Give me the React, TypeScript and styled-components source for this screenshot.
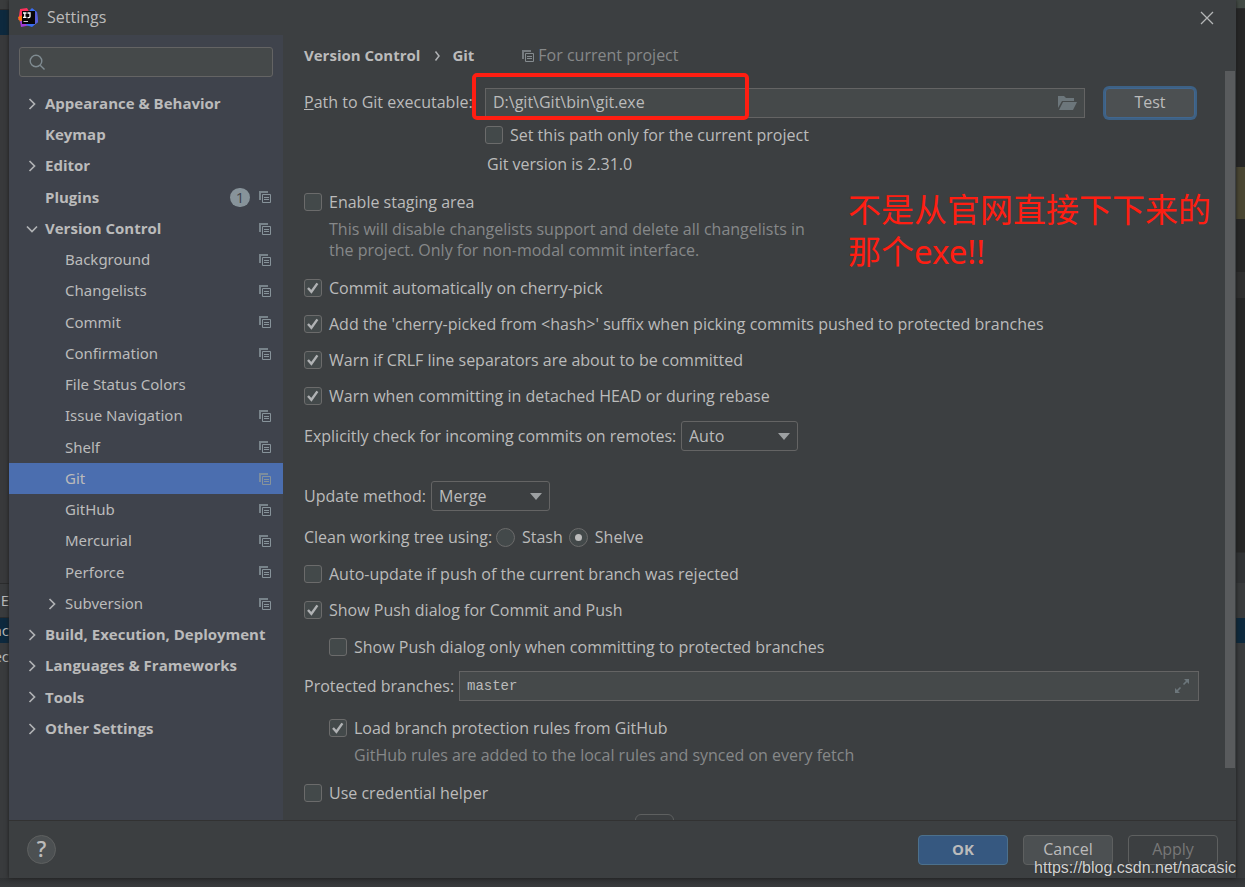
import React, { useState } from "react";
import styled, { createGlobalStyle } from "styled-components";

const color = {
  panel: "#3c3f41",
  side: "#3f434c",
  text: "#bbbbbb",
  muted: "#868889",
  line: "#323232",
  field: "#45494a",
  border: "#646464",
  icon: "#87939a",
  select: "#4b6eaf",
  red: "#ff1e12",
};

const Global = createGlobalStyle`
  *, *::before, *::after { box-sizing: border-box; }
  body {
    margin: 0;
    background: #3a3c3d;
    color: ${color.text};
    font: 16px/21px "Open Sans", "Noto Sans", sans-serif;
  }
  button, input, select { font: inherit; color: inherit; margin: 0; }
`;

const Desktop = styled.div`
  display: flex;
  flex-direction: column;
  height: 100vh;
  overflow: hidden;
`;
const Middle = styled.div`
  flex: 1;
  min-height: 0;
  display: flex;
`;
const Backdrop = styled.div`
  flex: none;
  width: 9px;
  display: flex;
  flex-direction: column;
  overflow: hidden;
  font-size: 15px;
`;
const Band = styled.div<{ $h?: number; $bg: string; $line?: boolean }>`
  flex: ${(p) => (p.$h ? "none" : "1")};
  height: ${(p) => (p.$h ? p.$h + "px" : "auto")};
  display: flex;
  align-items: center;
  justify-content: flex-end;
  background: ${(p) => p.$bg};
  border-top: ${(p) => (p.$line ? "1px solid #2b2c2d" : "none")};
`;
const BottomStrip = styled.div`
  flex: none;
  height: 9px;
  background: linear-gradient(#303234, #393b3d);
`;

const Dialog = styled.main`
  flex: 1;
  min-width: 0;
  position: relative;
  display: flex;
  flex-direction: column;
  background: ${color.panel};
  box-shadow: 0 0 4px #1c1c1c;
`;
const TitleBar = styled.header`
  flex: none;
  height: 35px;
  display: flex;
  align-items: center;
  gap: 9px;
  padding: 0 20px 0 9px;
`;
const Title = styled.h1`
  flex: 1;
  margin: 0;
  font-size: 16px;
  font-weight: 400;
`;
const PlainButton = styled.button`
  display: flex;
  padding: 0;
  border: 0;
  background: none;
`;
const Body = styled.div`
  flex: 1;
  min-height: 0;
  display: flex;
`;

const Sidebar = styled.nav`
  flex: none;
  width: 274px;
  background: ${color.side};
  font-size: 15px;
  overflow: hidden;
`;
const Search = styled.label`
  display: flex;
  align-items: center;
  height: 30px;
  margin: 12px 10px 11px;
  padding: 0 9px;
  border: 1px solid ${color.border};
  border-radius: 3px;
  background: ${color.field};
`;
const BareInput = styled.input<{ $mono?: boolean }>`
  flex: 1;
  min-width: 0;
  padding: 0;
  border: 0;
  outline: 0;
  background: none;
  font-family: ${(p) => (p.$mono ? '"Liberation Mono", monospace' : "inherit")};
  font-size: ${(p) => (p.$mono ? "14px" : "16px")};
`;
const TreeRow = styled.button<{ $level: number; $active?: boolean }>`
  display: flex;
  align-items: center;
  width: 100%;
  height: 31px;
  padding: 0 12px 0 ${(p) => (p.$level ? 36 : 16)}px;
  border: 0;
  background: ${(p) => (p.$active ? color.select : "none")};
  font-family: ${(p) => (p.$level ? '"Noto Sans", sans-serif' : "inherit")};
  font-weight: ${(p) => (p.$level ? 400 : 700)};
  text-align: left;
  white-space: nowrap;
  &:nth-child(4n) { height: 32px; }
`;
const Toggle = styled.span`
  flex: none;
  display: flex;
  width: 20px;
`;
const RowText = styled.span`
  flex: 1;
`;
const Badge = styled.span`
  width: 20px;
  height: 19px;
  margin-right: 9px;
  border-radius: 10px;
  background: ${color.icon};
  color: ${color.side};
  font-weight: 400;
  line-height: 19px;
  text-align: center;
`;

const Content = styled.section`
  flex: 1;
  min-width: 0;
  display: flex;
  flex-direction: column;
`;
const Crumbs = styled.div`
  flex: none;
  display: flex;
  align-items: center;
  height: 36px;
  padding: 5px 0 0 21px;
  font-size: 15px;
  font-weight: 700;
`;
const CrumbArrow = styled.span`
  display: flex;
  margin: 0 11px 0 14px;
`;
const Scope = styled.span`
  display: flex;
  align-items: center;
  gap: 4px;
  margin-left: 48px;
  color: ${color.muted};
  font-size: 16px;
  font-weight: 400;
`;
const ScrollArea = styled.div`
  flex: 1;
  min-height: 0;
  display: flex;
  overflow: hidden;
`;
const Form = styled.form`
  flex: 1;
  min-width: 0;
  padding: 14px 26px 0 21px;
`;
const ScrollThumb = styled.div`
  flex: none;
  width: 10px;
  height: 93%;
  margin-right: 1px;
  background: #595b5d;
`;
const Row = styled.div<{ $top: number; $indent?: number; $h?: number }>`
  display: flex;
  align-items: center;
  height: ${(p) => p.$h || 24}px;
  margin-top: ${(p) => p.$top}px;
  padding-left: ${(p) => p.$indent || 0}px;
  white-space: nowrap;
`;
const Hint = styled.p<{ $indent: number }>`
  margin: 5px 0 0 ${(p) => p.$indent}px;
  color: ${color.muted};
`;
const FieldLabel = styled.label<{ $w: number }>`
  flex: none;
  width: ${(p) => p.$w}px;
`;
const Field = styled.div`
  position: relative;
  flex: 1;
  display: flex;
  align-items: center;
  height: 30px;
  padding: 0 7px;
  border: 1px solid ${color.border};
  background: ${color.field};
`;
const RedFrame = styled.div`
  position: absolute;
  left: -14px;
  top: -16px;
  width: 277px;
  height: 47px;
  border: 4px solid ${color.red};
  border-radius: 5px;
  pointer-events: none;
`;
const Button = styled.button<{ $kind?: "primary" | "focus" }>`
  flex: none;
  width: 90px;
  height: 30px;
  padding: 0;
  border: 1px solid ${(p) => (p.$kind === "primary" ? "#4c708c" : p.$kind === "focus" ? "#41678f" : "#5e6060")};
  border-radius: 4px;
  background: ${(p) => (p.$kind === "primary" ? "#365880" : "#4c5052")};
  font-size: ${(p) => (p.$kind === "primary" ? 15 : 16)}px;
  font-weight: ${(p) => (p.$kind === "primary" ? 700 : 400)};
  box-shadow: ${(p) => (p.$kind === "focus" ? "0 0 0 2px #3d6185" : "none")};
  &:disabled { background: none; color: #777777; }
`;
const HelperButton = styled(Button)`
  width: 39px;
  background: none;
  border-radius: 6px;
`;
const TestSlot = styled.div`
  display: flex;
  margin: 0 4px 0 20px;
`;

const CheckLabel = styled.label`
  display: flex;
  align-items: center;
  gap: 7px;
`;
const CheckBox = styled.span`
  display: grid;
  place-items: center;
  & > * { grid-area: 1 / 1; }
  svg { pointer-events: none; }
`;
const Tick = styled.input`
  appearance: none;
  width: 18px;
  height: 18px;
  border: 1px solid #6b6b6b;
  border-radius: 3px;
  background: #43494a;
`;
const Radio = styled(Tick)`
  width: 19px;
  height: 19px;
  border-radius: 10px;
  display: grid;
  place-items: center;
  &:checked::before {
    content: "";
    width: 7px;
    height: 7px;
    border-radius: 4px;
    background: ${color.text};
  }
`;
const RadioLabel = styled(CheckLabel)`
  margin-right: 6px;
`;
const SelectWrap = styled.span<{ $w: number }>`
  display: grid;
  align-items: center;
  width: ${(p) => p.$w}px;
  & > * { grid-area: 1 / 1; }
  svg { justify-self: end; margin-right: 8px; pointer-events: none; }
`;
const SelectBox = styled.select`
  appearance: none;
  height: 30px;
  padding: 0 7px;
  border: 1px solid ${color.border};
  border-radius: 3px;
  background: ${color.panel};
`;

const Footer = styled.footer`
  flex: none;
  display: flex;
  align-items: center;
  gap: 15px;
  height: 58px;
  padding: 0 18px;
  border-top: 1px solid ${color.line};
`;
const HelpButton = styled.button`
  width: 29px;
  height: 29px;
  margin-right: auto;
  padding: 0;
  border: 1px solid #5e6060;
  border-radius: 15px;
  background: #4c5052;
  font-size: 21px;
  font-weight: 600;
`;
const RedNote = styled.p`
  position: absolute;
  left: 839px;
  top: 189px;
  margin: 0;
  color: ${color.red};
  font: 33px/42px "Noto Sans", "Noto Sans CJK SC", sans-serif;
  white-space: nowrap;
`;
const Watermark = styled.span`
  position: absolute;
  right: 9px;
  bottom: 10px;
  color: #d2d2d2;
  font: 16px/18px "Liberation Sans", sans-serif;
  text-shadow: 0 0 1px #222222;
`;

const CopyIcon = ({ tint = color.icon }: { tint?: string }) => (
  <svg width="12" height="12" viewBox="0 0 12 12" fill="none" stroke={tint}>
    <path d="M2 9H0V0H9V2H2Z" fill={tint} stroke="none" opacity="0.8" />
    <path d="M3.5 11.5V3.5H11.5V11.5Z" />
    <path d="M5 6.5H10M5 8.5H10" />
  </svg>
);
const Chevron = ({ open }: { open?: boolean }) => (
  <svg width="14" height="14" viewBox="0 0 14 14" fill="none" stroke="#b0b2b4" strokeWidth="1.7">
    <path d={open ? "M2 4.5L7 9.5L12 4.5" : "M4.5 2L9.5 7L4.5 12"} />
  </svg>
);
const CheckIcon = () => (
  <svg width="18" height="18" viewBox="0 0 18 18" fill="none" stroke="#b0b2b4" strokeWidth="2.4">
    <path d="M4 9L7.4 12.8L13.4 4.4" />
  </svg>
);
const ArrowDown = () => (
  <svg width="12" height="7" viewBox="0 0 12 7">
    <path d="M0 0H12L6 7Z" fill="#9da0a2" />
  </svg>
);
const AppLogo = () => (
  <svg width="20" height="20" viewBox="0 0 20 20">
    <path d="M2 1L9 0L12 5L8 10L0 12L1 8Z" fill="#fe315d" />
    <path d="M0 9L5 7L7 12L2 14Z" fill="#f97a12" />
    <path d="M2 13L10 12L13 17L3 19Z" fill="#a33bd4" />
    <path d="M11 3L14 0L19 4L20 14L14 19L8 17Z" fill="#3a6df0" />
    <path d="M16 5L19 4L20 14L16 17Z" fill="#5a5ed8" />
    <rect x="4" y="3" width="13" height="13" fill="#080608" />
    <path d="M5 5H8.5M6.8 5V9.3M5 9.4H8.5M9.500 5H12V8.6Q12 9.6 10.800 9.6H9.5" stroke="#fff" strokeWidth="1.3" fill="none" />
    <path d="M5.5 13.5H10" stroke="#c8c8c8" />
  </svg>
);

type Item = { name: string; level?: number; arrow?: "open" | "closed"; copy?: boolean; badge?: string };
const items: Item[] = [
  { name: "Appearance & Behavior", arrow: "closed" },
  { name: "Keymap" },
  { name: "Editor", arrow: "closed" },
  { name: "Plugins", copy: true, badge: "1" },
  { name: "Version Control", arrow: "open", copy: true },
  { name: "Background", level: 1, copy: true },
  { name: "Changelists", level: 1, copy: true },
  { name: "Commit", level: 1, copy: true },
  { name: "Confirmation", level: 1, copy: true },
  { name: "File Status Colors", level: 1 },
  { name: "Issue Navigation", level: 1, copy: true },
  { name: "Shelf", level: 1, copy: true },
  { name: "Git", level: 1, copy: true },
  { name: "GitHub", level: 1, copy: true },
  { name: "Mercurial", level: 1, copy: true },
  { name: "Perforce", level: 1, copy: true },
  { name: "Subversion", level: 1, arrow: "closed", copy: true },
  { name: "Build, Execution, Deployment", arrow: "closed" },
  { name: "Languages & Frameworks", arrow: "closed" },
  { name: "Tools", arrow: "closed" },
  { name: "Other Settings", arrow: "closed" },
];

function Check({ text, on = false }: { text: string; on?: boolean }) {
  const [checked, setChecked] = useState(on);
  return (
    <CheckLabel>
      <CheckBox>
        <Tick type="checkbox" checked={checked} onChange={() => setChecked(!checked)} />
        {checked && <CheckIcon />}
      </CheckBox>
      {text}
    </CheckLabel>
  );
}

function Select({ id, width, options }: { id: string; width: number; options: string[] }) {
  return (
    <SelectWrap $w={width}>
      <SelectBox id={id}>
        {options.map((o) => <option key={o}>{o}</option>)}
      </SelectBox>
      <ArrowDown />
    </SelectWrap>
  );
}

export default function App() {
  const [active, setActive] = useState("Git");
  return (
    <Desktop>
      <Global />
      <Middle>
        <Backdrop>
          <Band $h={9} $bg="#3a3c3d" />
          <Band $h={26} $bg="#0d293e" $line />
          <Band $h={548} $bg="#38393b" />
          <Band $h={34} $bg="#393b3d" $line>E</Band>
          <Band $h={26} $bg="#0d293e" $line>ac</Band>
          <Band $h={26} $bg="#393b3d">ec</Band>
          <Band $bg="#393b3d" />
        </Backdrop>
        <Dialog>
          <TitleBar>
            <AppLogo />
            <Title>Settings</Title>
            <PlainButton type="button" aria-label="Close">
              <svg width="18" height="14" viewBox="0 0 18 14" stroke="#b4b6b7" strokeWidth="1.3">
                <path d="M3 1L15 13M15 1L3 13" />
              </svg>
            </PlainButton>
          </TitleBar>
          <Body>
            <Sidebar>
              <Search>
                <svg width="17" height="17" viewBox="0 0 17 17" fill="none" stroke="#7f8b91" strokeWidth="1.4">
                  <circle cx="7" cy="7" r="5.8" />
                  <path d="M11.2 11.2L15.5 15.5" />
                </svg>
                <BareInput aria-label="Search settings" />
              </Search>
              <div>
                {items.map((it) => (
                  <TreeRow
                    key={it.name}
                    type="button"
                    $level={it.level || 0}
                    $active={it.name === active}
                    onClick={() => setActive(it.name)}
                  >
                    <Toggle>{it.arrow && <Chevron open={it.arrow === "open"} />}</Toggle>
                    <RowText>{it.name}</RowText>
                    {it.badge && <Badge>{it.badge}</Badge>}
                    {it.copy && <CopyIcon />}
                  </TreeRow>
                ))}
              </div>
            </Sidebar>
            <Content>
              <Crumbs>
                Version Control
                <CrumbArrow>
                  <svg width="7" height="12" viewBox="0 0 7 12" fill="none" stroke="#b0b2b4" strokeWidth="1.5">
                    <path d="M1.5 1.5L5 6L1.5 10.5" />
                  </svg>
                </CrumbArrow>
                Git
                <Scope><CopyIcon tint="#858b8f" />For current project</Scope>
              </Crumbs>
              <ScrollArea>
                <Form onSubmit={(e) => e.preventDefault()}>
                  <Row $top={0} $h={35}>
                    <FieldLabel htmlFor="path" $w={181}><u>P</u>ath to Git executable:</FieldLabel>
                    <Field>
                      <BareInput id="path" defaultValue="D:\git\Git\bin\git.exe" />
                      <PlainButton type="button" aria-label="Browse">
                        <svg width="19" height="14" viewBox="0 0 19 14" fill="#6c767b">
                          <path d="M0 0H6L8 2H16V5H4L0 12Z" />
                          <path d="M5 6H19L15 14H1Z" />
                        </svg>
                      </PlainButton>
                      <RedFrame />
                    </Field>
                    <TestSlot><Button type="button" $kind="focus">Test</Button></TestSlot>
                  </Row>
                  <Row $top={3} $indent={181}><Check text="Set this path only for the current project" /></Row>
                  <Row $top={5} $indent={183}>Git version is 2.31.0</Row>
                  <Row $top={14}><Check text="Enable staging area" /></Row>
                  <Hint $indent={25}>
                    This will disable changelists support and delete all changelists in<br />
                    the project. Only for non-modal commit interface.
                  </Hint>
                  <Row $top={15}><Check on text="Commit automatically on cherry-pick" /></Row>
                  <Row $top={12}><Check on text="Add the 'cherry-picked from <hash>' suffix when picking commits pushed to protected branches" /></Row>
                  <Row $top={12}><Check on text="Warn if CRLF line separators are about to be committed" /></Row>
                  <Row $top={12}><Check on text="Warn when committing in detached HEAD or during rebase" /></Row>
                  <Row $top={13} $h={30}>
                    <FieldLabel htmlFor="incoming" $w={377}>Explicitly check for incoming commits on remotes:</FieldLabel>
                    <Select id="incoming" width={117} options={["Auto", "Always", "Never"]} />
                  </Row>
                  <Row $top={30} $h={30}>
                    <FieldLabel htmlFor="method" $w={127}>Update method:</FieldLabel>
                    <Select id="method" width={119} options={["Merge", "Rebase"]} />
                  </Row>
                  <Row $top={14}>
                    <FieldLabel as="span" $w={192}>Clean working tree using:</FieldLabel>
                    <RadioLabel><Radio type="radio" name="clean" />Stash</RadioLabel>
                    <RadioLabel><Radio type="radio" name="clean" defaultChecked />Shelve</RadioLabel>
                  </Row>
                  <Row $top={13}><Check text="Auto-update if push of the current branch was rejected" /></Row>
                  <Row $top={12}><Check on text="Show Push dialog for Commit and Push" /></Row>
                  <Row $top={13} $indent={25}><Check text="Show Push dialog only when committing to protected branches" /></Row>
                  <Row $top={12} $h={30}>
                    <FieldLabel htmlFor="branches" $w={155}>Protected branches:</FieldLabel>
                    <Field>
                      <BareInput id="branches" $mono defaultValue="master" />
                      <PlainButton type="button" aria-label="Expand">
                        <svg width="18" height="18" viewBox="0 0 18 18" fill="#6c767b" stroke="#6c767b" strokeWidth="1.6">
                          <path d="M10.5 7.5L15 3M7.5 10.5L3 15" />
                          <path d="M11 2H16V7ZM2 11V16H7Z" stroke="none" />
                        </svg>
                      </PlainButton>
                    </Field>
                  </Row>
                  <Row $top={15} $indent={25}><Check on text="Load branch protection rules from GitHub" /></Row>
                  <Hint $indent={50}>GitHub rules are added to the local rules and synced on every fetch</Hint>
                  <Row $top={15}><Check text="Use credential helper" /></Row>
                  <Row $top={9} $indent={331} $h={30}>
                    <HelperButton type="button" aria-label="Configure helper" />
                  </Row>
                </Form>
                <ScrollThumb />
              </ScrollArea>
            </Content>
          </Body>
          <Footer>
            <HelpButton type="button" aria-label="Help">?</HelpButton>
            <Button type="button" $kind="primary">OK</Button>
            <Button type="button">Cancel</Button>
            <Button type="button" disabled>Apply</Button>
          </Footer>
          <RedNote lang="zh-CN">不是从官网直接下下来的<br />那个exe!!</RedNote>
        </Dialog>
        <Backdrop>
          <Band $h={8} $bg="#434b45" />
          <Band $h={159} $bg="#262626" $line />
          <Band $h={52} $bg="#4a4632" />
          <Band $h={53} $bg="#262626" />
          <Band $h={26} $bg="#2f2f2f" />
          <Band $h={254} $bg="#262626" />
          <Band $h={31} $bg="#313335" $line />
          <Band $h={35} $bg="#393b3c" />
          <Band $h={25} $bg="#0d293e" />
          <Band $bg="#393b3d" />
        </Backdrop>
      </Middle>
      <BottomStrip />
      <Watermark>https://blog.csdn.net/nacasic</Watermark>
    </Desktop>
  );
}
